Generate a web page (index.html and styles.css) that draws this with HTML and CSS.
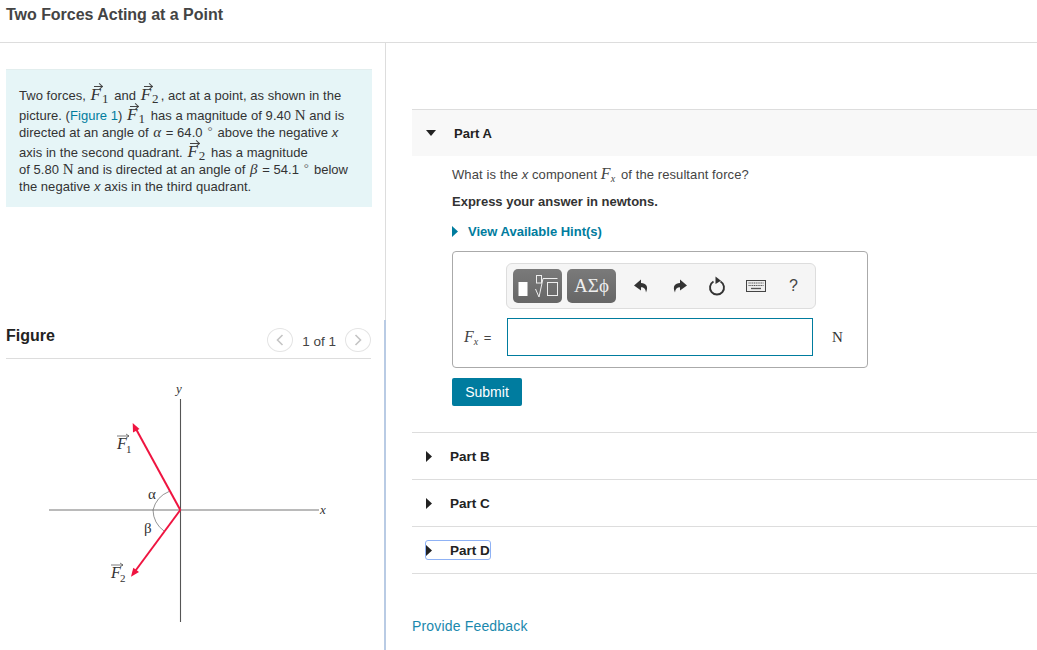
FILE: index.html
```html
<!DOCTYPE html>
<html lang="en">
<head>
<meta charset="utf-8">
<title>Two Forces Acting at a Point</title>
<link rel="stylesheet" href="styles.css">
</head>
<body>
<header class="page-head"><h1>Two Forces Acting at a Point</h1></header>
<main class="layout">
  <section class="left">
    <div class="intro">
      <div class="ln">Two forces, <span class="vec">F</span><sub>1</sub> and <span class="vec">F</span><sub>2</sub>, act at a point, as shown in the</div>
      <div class="ln ln-gap">picture. (<a class="link">Figure 1</a>) <span class="vec">F</span><sub>1</sub> has a magnitude of 9.40 <span class="m">N</span> and is</div>
      <div class="ln">directed at an angle of <span class="mi">α</span> = 64.0 <span class="deg">°</span> above the negative <em>x</em></div>
      <div class="ln ln-gap">axis in the second quadrant. <span class="vec">F</span><sub>2</sub> has a magnitude</div>
      <div class="ln">of 5.80 <span class="m">N</span> and is directed at an angle of <span class="mi">β</span> = 54.1 <span class="deg">°</span> below</div>
      <div class="ln">the negative <em>x</em> axis in the third quadrant.</div>
    </div>
    <div class="fig-head">
      <h2>Figure</h2>
      <div class="pager">
        <span class="pg-btn"><svg width="10" height="14" viewBox="0 0 10 14"><path d="M7.5 2 L2.5 7 L7.5 12" fill="none" stroke="#c4c4c4" stroke-width="1.6"/></svg></span>
        <span class="pg-text">1 of 1</span>
        <span class="pg-btn"><svg width="10" height="14" viewBox="0 0 10 14"><path d="M2.5 2 L7.5 7 L2.5 12" fill="none" stroke="#c4c4c4" stroke-width="1.6"/></svg></span>
      </div>
    </div>
    <svg class="diagram" width="300" height="250" viewBox="0 0 300 250">
      <line x1="9" y1="135" x2="279" y2="135" stroke="#777" stroke-width="1.2"/>
      <line x1="140.5" y1="24" x2="140.5" y2="247" stroke="#555" stroke-width="1.1"/>
      <path d="M113 135 A27 27 0 0 1 129 116.5" fill="none" stroke="#666" stroke-width=".7"/>
      <path d="M113 135 A27 27 0 0 0 124 156" fill="none" stroke="#666" stroke-width=".7"/>
      <line x1="140.3" y1="135" x2="96" y2="54" stroke="#ef1440" stroke-width="2"/>
      <line x1="140.3" y1="135" x2="94.5" y2="197" stroke="#ef1440" stroke-width="2"/>
      <path d="M92.7 48 L99.5 54 L93 57.5 Z" fill="#ef1440"/>
      <path d="M91 201.7 L93.3 192.8 L99 197 Z" fill="#ef1440"/>
      <text class="t-it" x="280" y="139">x</text>
      <text class="t-it" x="136" y="18">y</text>
      <text class="t-sym" x="108" y="124">α</text>
      <text class="t-sym" x="104" y="158">β</text>
      <text class="t-f" x="77" y="74">F</text><text class="t-s" x="86" y="78">1</text>
      <path d="M77 61 H89 M86 59 L89 61 L86 63" fill="none" stroke="#444" stroke-width=".7"/>
      <text class="t-f" x="71" y="203">F</text><text class="t-s" x="80" y="207">2</text>
      <path d="M71 190 H83 M80 188 L83 190 L80 192" fill="none" stroke="#444" stroke-width=".7"/>
    </svg>
  </section>
  <div class="divider"></div>
  <section class="right">
    <div class="part part-open">
      <svg class="tri-down" width="10" height="6" viewBox="0 0 10 6"><path d="M0 0 H10 L5 6 Z" fill="#222"/></svg>
      <span class="part-name">Part A</span>
    </div>
    <div class="part-body">
      <p class="q">What is the <em>x</em> component <span class="mf">F</span><sub class="subx">x</sub> of the resultant force?</p>
      <p class="ex">Express your answer in newtons.</p>
      <p class="hint"><svg width="6" height="11" viewBox="0 0 6 11"><path d="M0 0 L6 5.5 L0 11 Z" fill="#007c9e"/></svg><span>View Available Hint(s)</span></p>
      <div class="answer">
        <div class="toolbar">
          <span class="tool tool-tpl">
            <svg width="44" height="26" viewBox="0 0 44 26">
              <rect x="2.5" y="9" width="9" height="14" fill="#fff"/>
              <rect x="20.5" y="2.5" width="5" height="7.5" fill="none" stroke="#eee" stroke-width="1"/>
              <path d="M19.5 16 L23 24 L27 5.5 H41.5" fill="none" stroke="#eee" stroke-width="1"/>
              <rect x="31.5" y="9.5" width="10" height="13" fill="none" stroke="#eee" stroke-width="1"/>
            </svg>
          </span>
          <span class="tool tool-sym">ΑΣϕ</span>
          <span class="icons">
            <svg class="ic-undo" width="16" height="16" viewBox="0 0 16 16"><path d="M8 1.5 L1 7.5 L8 12.5 V9.3 C11 9.3 12.6 10.8 13 14.5 C15.8 8.5 13 5 8 5 Z" fill="#333"/></svg>
            <svg class="ic-redo" width="16" height="16" viewBox="0 0 16 16"><path d="M8 1.5 L15 7.5 L8 12.5 V9.3 C5 9.3 3.4 10.8 3 14.5 C.2 8.5 3 5 8 5 Z" fill="#333"/></svg>
            <svg class="ic-reload" width="18" height="20" viewBox="0 0 18 20"><path d="M5.5 5.5 A7 7 0 1 0 12.5 5.5" fill="none" stroke="#333" stroke-width="1.9"/><path d="M7.5 .5 L13 4.8 L7.5 8 Z" fill="#333"/></svg>
            <svg class="ic-kbd" width="20" height="12" viewBox="0 0 20 12"><rect x=".5" y=".5" width="19" height="11" fill="#eee" stroke="#444"/><path d="M2.5 3 H17.5 M2.5 5.5 H17.5" stroke="#555" stroke-width="1.2" stroke-dasharray="1.2 .6"/><path d="M5 8.5 H15" stroke="#555" stroke-width="1.3"/></svg>
            <span class="qm">?</span>
          </span>
        </div>
        <div class="row">
          <label class="lhs"><span class="mf">F</span><sub class="subx">x</sub> <span class="eq">=</span></label>
          <div class="input"></div>
          <span class="unit">N</span>
        </div>
      </div>
      <button class="submit">Submit</button>
    </div>
    <div class="part part-closed">
      <svg class="tri-right" width="6" height="11" viewBox="0 0 6 11"><path d="M0 0 L6 5.5 L0 11 Z" fill="#222"/></svg>
      <span class="part-name">Part B</span>
    </div>
    <div class="part part-closed">
      <svg class="tri-right" width="6" height="11" viewBox="0 0 6 11"><path d="M0 0 L6 5.5 L0 11 Z" fill="#222"/></svg>
      <span class="part-name">Part C</span>
    </div>
    <div class="part part-closed part-last">
      <span class="focus">
        <svg class="tri-right" width="6" height="11" viewBox="0 0 6 11"><path d="M0 0 L6 5.5 L0 11 Z" fill="#222"/></svg>
        <span class="part-name">Part D</span>
      </span>
    </div>
    <a class="feedback">Provide Feedback</a>
  </section>
</main>
</body>
</html>
```
FILE: styles.css
```css
* { box-sizing: border-box; }
html, body { margin: 0; height: 650px; overflow: hidden; background: #fff; }
body { font-family: "Liberation Sans", Arial, sans-serif; color: #333; font-size: 13px; }
.page-head { height: 43px; border-bottom: 1px solid #ddd; padding: 6px 6px 0; }
h1 { margin: 0; font-size: 16px; line-height: 18px; font-weight: 700; color: #444; letter-spacing: -.03px; }
.layout { display: flex; height: 607px; }
.left { width: 384px; padding: 26px 13px 0 6px; flex: none; }
.divider { width: 2px; flex: none; }
.divider::before { content: ""; display: block; height: 277px; width: 1px; margin-left: 1px; background: #ddd; }
.divider::after { content: ""; display: block; height: 330px; background: #b9cbe4; }
.right { flex: 1; padding: 66px 0 0 26px; min-width: 0; }

.intro { height: 138px; margin-right: -1px; background: #e6f5f7; border-top: 1px solid #e2eeee; padding: 17px 13px 0; color: #333; letter-spacing: .04px; }
.ln { white-space: nowrap; height: 17px; line-height: 17px; }
.ln-gap { margin-top: 3px; }
.link { color: #007c9e; }
.vec { position: relative; display: inline-block; font: italic 17px/0 "Liberation Serif", serif; padding: 0 1px; }
.vec::before { content: ""; position: absolute; left: 4px; right: 0; top: -9px; height: 1px; background: #444; }
.vec::after { content: ""; position: absolute; right: 0; top: -11px; width: 4px; height: 4px; border-top: 1px solid #444; border-right: 1px solid #444; transform: rotate(45deg); }
.ln sub { font: 13px/0 "Liberation Serif", serif; vertical-align: -3px; margin-right: 2px; }
.m { font: 15px/0 "Liberation Serif", serif; }
.mi { font: italic 15px/0 "Liberation Serif", serif; margin: 0 1px; }
.deg { font-size: 14px; line-height: 0; color: #777; vertical-align: 0; margin: 0 1px; }

.fig-head { display: flex; align-items: flex-start; justify-content: space-between; margin-top: 117px; height: 35px; border-bottom: 1px solid #ddd; }
h2 { margin: 0; font-size: 16px; line-height: 18px; font-weight: 700; color: #222; padding-top: 3px; }
.pager { display: flex; align-items: center; gap: 9px; margin-top: 4px; }
.pg-btn { width: 26px; height: 24px; border: 1px solid #e4e4e4; border-radius: 50%; display: flex; align-items: center; justify-content: center; }
.pg-text { font-size: 13.5px; color: #444; padding-top: 2px; }
.diagram { display: block; margin: 16px 0 0 34px; }
.diagram text { fill: #333; font-family: "Liberation Serif", serif; }
.t-it { font-style: italic; font-size: 13px; }
.t-sym { font-size: 15px; }
.t-f { font-style: italic; font-size: 16px; }
.t-s { font-size: 11px; }

.part { display: flex; align-items: center; border-top: 1px solid #ddd; height: 47px; padding-left: 14px; }
.part-name { font-weight: 700; font-size: 13.5px; color: #222; }
.part-open { background: #f8f8f8; }
.part-open .part-name { margin-left: 18px; font-size: 13px; padding-top: 1px; }
.part-closed .part-name { margin-left: 18px; }
.part-last { height: 48px; border-bottom: 1px solid #ddd; }
.part-body { padding: 0 0 0 40px; height: 276px; overflow: hidden; }
.q { margin: 11px 0 0; line-height: 16px; color: #444; font-size: 13px; letter-spacing: .09px; white-space: nowrap; }
.mf { font: italic 16px/0 "Liberation Serif", serif; color: #444; }
.subx { font: italic 10px/0 "Liberation Serif", serif; vertical-align: -3px; margin-right: 2px; }
.ex { margin: 11px 0 0; line-height: 16px; font-weight: 700; color: #333; }
.hint { margin: 13px 0 0; height: 16px; display: flex; align-items: center; gap: 10px; font-weight: 700; color: #007c9e; }
.answer { margin-top: 12px; width: 416px; height: 117px; border: 1px solid #aaa; border-radius: 4px; padding-top: 11px; }
.toolbar { margin-left: 53px; width: 310px; height: 46px; background: #f5f5f5; border: 1px solid #ddd; border-radius: 6px; display: flex; align-items: center; padding: 0 6px; gap: 5px; }
.tool { height: 34px; width: 49px; flex: none; border-radius: 5px; background: linear-gradient(#7a7a7a, #666); display: flex; align-items: center; justify-content: center; color: #eee; }
.tool-sym { font: 19px "Liberation Serif", serif; }
.icons { display: flex; align-items: center; flex: 1; margin-left: 12px; }
.ic-redo { margin-left: 23px; }
.ic-reload { margin-left: 20px; }
.ic-kbd { margin-left: 20px; }
.qm { font-size: 16px; color: #444; margin-left: 23px; }
.row { display: flex; align-items: center; margin-top: 9px; }
.lhs { width: 54px; padding-left: 11px; white-space: nowrap; color: #444; }
.eq { font-size: 13px; }
.input { width: 306px; height: 38px; border: 1px solid #007c9e; background: #fff; }
.unit { font: 15px "Liberation Serif", serif; margin-left: 19px; color: #333; }
.submit { display: block; margin: 10px 0 0; width: 70px; height: 28px; border: 0; border-radius: 2px; background: #007c9f; color: #fff; font: 14px "Liberation Sans", Arial, sans-serif; }
.focus { display: flex; align-items: center; height: 18px; outline: 1px solid #8fb2f5; border-radius: 2px; }
.feedback { display: block; margin-top: 43px; font-size: 14px; line-height: 18px; color: #1a88ad; letter-spacing: .17px; }
```
